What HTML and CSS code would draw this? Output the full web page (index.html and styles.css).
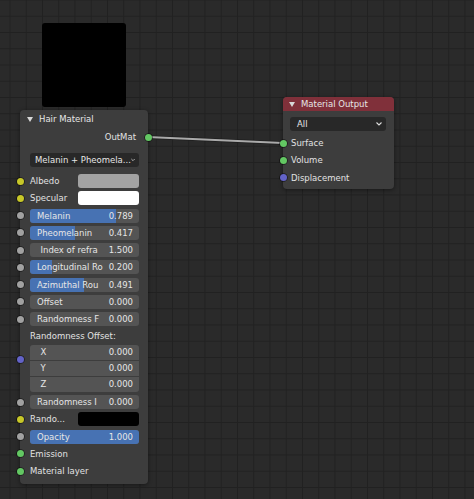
FILE: index.html
```html
<!DOCTYPE html>
<html>
<head>
<meta charset="utf-8">
<link rel="stylesheet" href="styles.css">
</head>
<body>
<div class="canvas">
  <div class="preview"></div>

  <svg class="links" width="474" height="499" viewBox="0 0 474 499">
    <line x1="147.5" y1="137" x2="283" y2="143" stroke="#1e1e1e" stroke-width="3.4" stroke-linecap="round"/>
    <line x1="147.5" y1="137" x2="283" y2="143" stroke="#aaaaaa" stroke-width="1.8" stroke-linecap="round"/>
  </svg>

  <div class="node hair">
    <div class="node-head">
      <svg class="tri" width="6" height="5" viewBox="0 0 6 5"><path d="M0 0H6L3 5Z" fill="#d8d8d8"/></svg>
      <span>Hair Material</span>
    </div>
    <div class="row out-row">
      <span>OutMat</span>
      <i class="sock right green"></i>
    </div>
    <div class="row drop-row">
      <div class="dropdown">
        <span>Melanin + Pheomela...</span>
        <svg class="chev" width="6" height="4" viewBox="0 0 6 4"><path d="M0.5 0.5L3 3L5.5 0.5" fill="none" stroke="#dcdcdc" stroke-width="1.1"/></svg>
      </div>
    </div>
    <div class="row first-row">
      <i class="sock left yellow"></i>
      <span class="lbl">Albedo</span>
      <span class="swatch sw-grey"></span>
    </div>
    <div class="row">
      <i class="sock left yellow"></i>
      <span class="lbl">Specular</span>
      <span class="swatch sw-white"></span>
    </div>
    <div class="row">
      <i class="sock left grey"></i>
      <div class="field"><b class="fill" style="width:78.9%"></b><span>Melanin</span><span>0.789</span></div>
    </div>
    <div class="row">
      <i class="sock left grey"></i>
      <div class="field"><b class="fill" style="width:41.7%"></b><span>Pheomelanin</span><span>0.417</span></div>
    </div>
    <div class="row">
      <i class="sock left grey"></i>
      <div class="field num ior"><span>Index of refra</span><span>1.500</span></div>
    </div>
    <div class="row">
      <i class="sock left grey"></i>
      <div class="field"><b class="fill" style="width:20%"></b><span>Longitudinal Ro</span><span>0.200</span></div>
    </div>
    <div class="row">
      <i class="sock left grey"></i>
      <div class="field"><b class="fill" style="width:49.1%"></b><span>Azimuthal Rou</span><span>0.491</span></div>
    </div>
    <div class="row">
      <i class="sock left grey"></i>
      <div class="field num"><span>Offset</span><span>0.000</span></div>
    </div>
    <div class="row">
      <i class="sock left grey"></i>
      <div class="field num"><span>Randomness F</span><span>0.000</span></div>
    </div>
    <div class="row">
      <span class="lbl">Randomness Offset:</span>
    </div>
    <div class="vrow">
      <i class="sock left purple vsock"></i>
      <div class="vgroup">
        <div class="vfield"><span>X</span><span>0.000</span></div>
        <div class="vfield"><span>Y</span><span>0.000</span></div>
        <div class="vfield"><span>Z</span><span>0.000</span></div>
      </div>
    </div>
    <div class="row">
      <i class="sock left grey"></i>
      <div class="field num"><span>Randomness I</span><span>0.000</span></div>
    </div>
    <div class="row">
      <i class="sock left yellow"></i>
      <span class="lbl">Rando...</span>
      <span class="swatch sw-black"></span>
    </div>
    <div class="row">
      <i class="sock left grey"></i>
      <div class="field"><b class="fill" style="width:100%"></b><span>Opacity</span><span>1.000</span></div>
    </div>
    <div class="row">
      <i class="sock left green"></i>
      <span class="lbl">Emission</span>
    </div>
    <div class="row">
      <i class="sock left green"></i>
      <span class="lbl">Material layer</span>
    </div>
  </div>

  <div class="node output">
    <div class="node-head red">
      <svg class="tri" width="6" height="5" viewBox="0 0 6 5"><path d="M0 0H6L3 5Z" fill="#d8d8d8"/></svg>
      <span>Material Output</span>
    </div>
    <div class="orow-drop">
      <div class="dropdown">
        <span>All</span>
        <svg class="chev" width="6" height="4" viewBox="0 0 6 4"><path d="M0.5 0.5L3 3L5.5 0.5" fill="none" stroke="#dcdcdc" stroke-width="1.1"/></svg>
      </div>
    </div>
    <div class="orow orow-first">
      <i class="sock left green"></i>
      <span class="lbl">Surface</span>
    </div>
    <div class="orow">
      <i class="sock left green"></i>
      <span class="lbl">Volume</span>
    </div>
    <div class="orow">
      <i class="sock left purple"></i>
      <span class="lbl">Displacement</span>
    </div>
  </div>
</div>
</body>
</html>
```

FILE: styles.css
```css
* { box-sizing: border-box; }

html, body {
  margin: 0;
  padding: 0;
  width: 474px;
  height: 499px;
  overflow: hidden;
  background: #292929;
}

.canvas {
  position: relative;
  width: 474px;
  height: 499px;
  overflow: hidden;
  font-family: "DejaVu Sans", "Liberation Sans", sans-serif;
  font-size: 8.5px;
  color: #e2e2e2;
  background-color: #2a2a2a;
  background-image:
    linear-gradient(to right, #212121 1px, transparent 1px),
    linear-gradient(to bottom, #212121 1px, transparent 1px);
  background-size: 16.25px 16.25px;
  background-position: 9.5px -0.5px;
}

.preview {
  position: absolute;
  left: 42px;
  top: 23px;
  width: 84px;
  height: 84px;
  background: #000;
  border-radius: 3px;
}

.links {
  position: absolute;
  left: 0;
  top: 0;
}

.node {
  position: absolute;
  background: #3d3d3d;
  border-radius: 4px;
  box-shadow: 0 1px 4px rgba(0, 0, 0, 0.45);
}

.hair {
  left: 20px;
  top: 110px;
  width: 128px;
  padding-bottom: 4px;
}

.output {
  left: 283px;
  top: 97px;
  width: 111px;
  padding-bottom: 3px;
}

.node-head {
  display: flex;
  align-items: center;
  height: 17px;
  padding-left: 7px;
  color: #e6e6e6;
  border-radius: 4px 4px 0 0;
  white-space: nowrap;
}

.node-head .tri {
  margin-right: 6px;
  margin-top: 1px;
}

.node-head.red {
  height: 14px;
  background: #80303a;
  padding-left: 6px;
}

.row {
  position: relative;
  display: flex;
  align-items: center;
  height: 17.25px;
  padding: 0 9px 0 10px;
  white-space: nowrap;
}

.out-row {
  justify-content: flex-end;
  margin-top: 1.4px;
  padding-right: 12px;
}

.drop-row { margin-top: 5.8px; }
.first-row { margin-top: 3.8px; }

.lbl {
  flex: 1;
  white-space: nowrap;
}

.sock {
  position: absolute;
  top: 50%;
  width: 7px;
  height: 7px;
  margin-top: -3.5px;
  border-radius: 50%;
  box-shadow: 0 0 0 0.8px rgba(0, 0, 0, 0.55);
}

.sock.left { left: -3.5px; }
.sock.right { right: -3.5px; }

.yellow { background: #c7c729; }
.grey { background: #a1a1a1; }
.green { background: #63c763; }
.purple { background: #6363c7; }

.dropdown {
  display: flex;
  align-items: center;
  justify-content: space-between;
  width: 100%;
  height: 14px;
  padding: 0 4px 0 5px;
  background: #282828;
  border-radius: 3px;
  color: #e6e6e6;
  white-space: nowrap;
  overflow: hidden;
}

.swatch {
  width: 61px;
  height: 14px;
  border-radius: 3px;
  flex: none;
}

.sw-grey { background: #a3a3a3; }
.sw-white { background: #ffffff; }
.sw-black { background: #000000; }

.field {
  position: relative;
  display: flex;
  align-items: center;
  justify-content: space-between;
  width: 100%;
  height: 14px;
  padding: 0 6px 0 7px;
  background: #545454;
  border-radius: 3px;
  overflow: hidden;
  color: #e6e6e6;
  white-space: nowrap;
}

.field.ior { padding-left: 10.5px; }

.field span {
  position: relative;
}

.fill {
  position: absolute;
  left: 0;
  top: 0;
  bottom: 0;
  background: #4772b3;
}

.vrow {
  position: relative;
  padding: 0 9px 0 10px;
  margin-bottom: 1.5px;
}

.vsock {
  top: 15px;
}

.vgroup {
  display: flex;
  flex-direction: column;
  gap: 1px;
  border-radius: 3px;
  overflow: hidden;
  background: #3d3d3d;
}

.vfield {
  display: flex;
  align-items: center;
  justify-content: space-between;
  height: 15px;
  padding: 0 6px 0 10.5px;
  background: #545454;
  color: #e6e6e6;
}

.orow-drop {
  padding: 0 8px 0 7px;
  margin-top: 6px;
}

.orow-drop .dropdown {
  padding-left: 7px;
}

.orow {
  position: relative;
  display: flex;
  align-items: center;
  height: 17.25px;
  padding: 0 8px;
}

.orow-first { margin-top: 3.4px; }
```
